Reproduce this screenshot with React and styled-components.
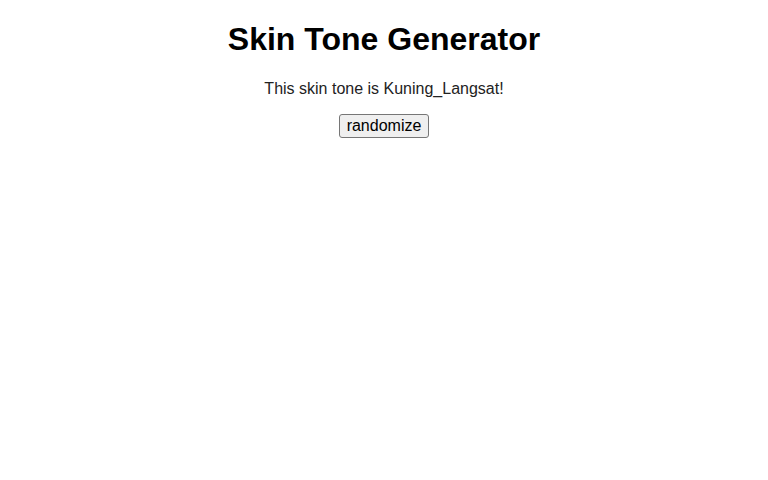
import React, { useState } from 'react';
import styled, { createGlobalStyle } from 'styled-components';

const tones = ['Kuning_Langsat', 'Sawo_Matang', 'Putih', 'Hitam_Manis'];

const GlobalStyle = createGlobalStyle`
  body {
    margin: 0;
    background: #fff;
    font-family: "Liberation Sans", Arial, sans-serif;
    color: #000;
  }
`;

const Page = styled.div`
  text-align: center;
`;

const Title = styled.h1`
  font-size: 32px;
  font-weight: bold;
  margin: 21.44px 0;
`;

const Message = styled.p`
  font-size: 16px;
  margin: 16px 0;
  color: #222;
`;

const RandomButton = styled.button`
  font-family: "Liberation Sans", Arial, sans-serif;
  font-size: 16px;
  color: #000;
  background: #efefef;
  border: 1px solid #767676;
  border-radius: 3px;
  padding: 2px 7px;
  cursor: pointer;
`;

const App = () => {
    const [tone, setTone] = useState(tones[0]);

    const randomize = () => {
        setTone(tones[Math.floor(Math.random() * tones.length)]);
    };

    return (
        <Page>
            <GlobalStyle/>
            <Title>Skin Tone Generator</Title>
            <Message>This skin tone is {tone}!</Message>
            <RandomButton onClick={randomize}>randomize</RandomButton>
        </Page>
    );
};

export default App;
